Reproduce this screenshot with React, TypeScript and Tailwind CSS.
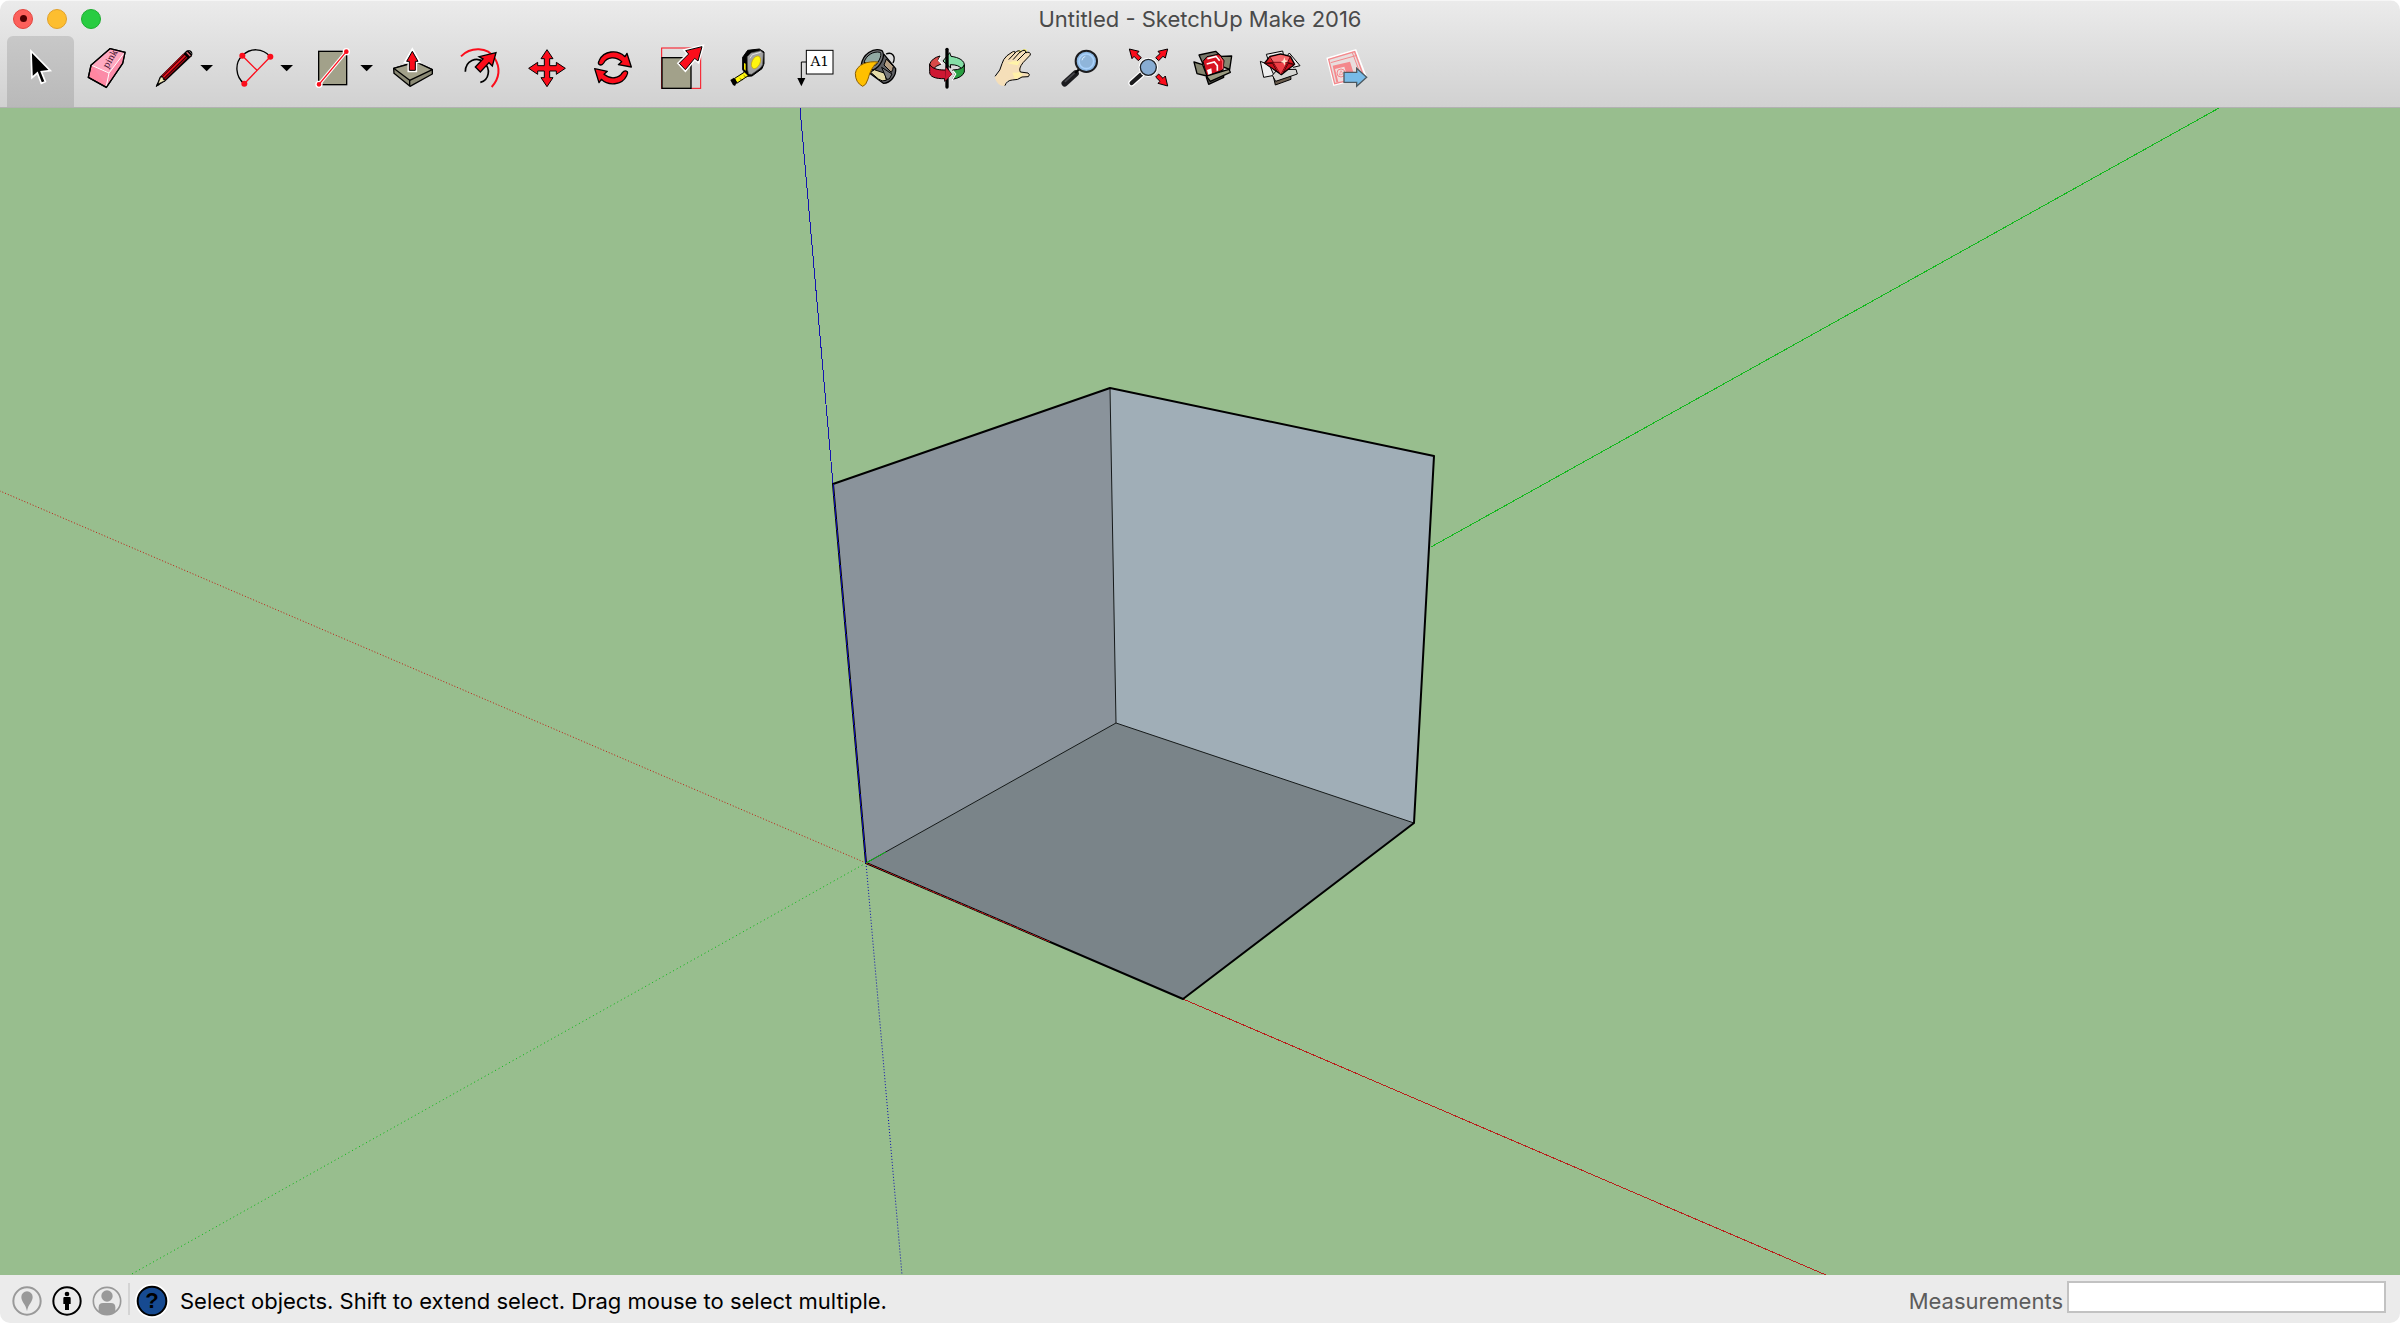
import type { ReactNode } from "react";

const RED = "#fb0d1b";
const STONE = "#a2a18a";

function Glyph({ box, wide, children }: { box: string; wide?: boolean; children: ReactNode }) {
  return (
    <svg
      viewBox={box}
      className={wide ? "h-16 w-20" : "h-16 w-16"}
      fill="none"
      stroke="#000"
      strokeWidth={4}
      aria-hidden="true"
    >
      {children}
    </svg>
  );
}

function Tool({ label, active, children }: { label: string; active?: boolean; children: ReactNode }) {
  return (
    <button
      type="button"
      aria-label={label}
      title={label}
      aria-pressed={active ? true : false}
      className={
        active
          ? "flex h-[71px] justify-center rounded-t-md bg-gradient-to-b from-[#c8c8c8] to-[#b9b9b9] pt-1"
          : "flex h-[71px] justify-center pt-1"
      }
    >
      {children}
    </button>
  );
}

function Toolbar() {
  return (
    <div role="toolbar" aria-label="Getting started tools" className="flex pl-[7px]">
      <div className="grid w-[133px] shrink-0 grid-cols-2">
        <Tool label="Select" active>
          <Glyph box="25 120 192 192">
            <path d="M94 153 L97 233 L113 219 L125 250 L137 245 L125 215 L152 212Z" fill="#000" stroke="#fff" strokeWidth={5} />
          </Glyph>
        </Tool>
        <Tool label="Eraser">
          <Glyph box="224 120 192 192">
            <path d="M272 196 L329 146 L374 157 L367 190 L318 262 L264 232Z" fill="#ff86a0" />
            <path d="M274 196 L329 148 L373 158 L328 218Z" fill="#ffa9c0" stroke="none" />
            <path d="M274 196 L328 218 L373 158 L366 188 L319 258Z" fill="#fb8ba8" stroke="none" />
            <path d="M274 196 L326 219 L371 160 M326 219 L318 258" stroke="#fff" strokeWidth={3} />
            <path d="M272 196 L329 146 L374 157 L367 190 L318 262 L264 232Z" strokeLinejoin="round" />
            <text x="322" y="207" transform="rotate(-59 322 207)" fill="#3a0d2a" stroke="none" fontSize="27" className="font-['DejaVu_Serif',serif]">
              pink
            </text>
          </Glyph>
        </Tool>
      </div>

      <div className="grid w-[240px] shrink-0 grid-cols-3">
        <Tool label="Line">
          <Glyph box="420 120 240 192" wide>
            <path d="M467 261 L479 231 L559 152 Q566 147 574 153 Q580 160 575 169 L496 244Z" fill="#000" stroke="none" />
            <path d="M486 228 L551 163 M494 238 L561 172" stroke="#9b0710" strokeWidth={4} />
            <path d="M490 232 L556 167" stroke="#f0101c" strokeWidth={5} />
            <path d="M474 252 L482 231 L489 232 L490 239 L497 241Z" fill="#f3e9b8" stroke="#000" strokeWidth={2} />
            <path d="M467 261 L472 248 L480 254Z" fill="#000" stroke="none" />
            <path d="M560 157 L571 168" stroke="#e46a74" strokeWidth={4} />
            <path d="M566 152 L575 161" stroke="#8d8d8d" strokeWidth={2} />
            <path d="M601 195 H639 L620 214Z" fill="#000" stroke="none" />
          </Glyph>
        </Tool>
        <Tool label="2 Point Arc">
          <Glyph box="660 120 240 192" wide>
            <path d="M733 251 C706 232 703 188 727 167 C750 143 788 143 811 170" />
            <path d="M733 251 L811 170 M727 167 L771 211" stroke={RED} />
            <g fill={RED} stroke="none">
              <circle cx="733" cy="251" r="9" />
              <circle cx="811" cy="170" r="9" />
              <circle cx="727" cy="167" r="9" />
            </g>
            <path d="M841 195 H879 L860 214Z" fill="#000" stroke="none" />
          </Glyph>
        </Tool>
        <Tool label="Rectangle">
          <Glyph box="0 30 240 192" wide>
            <rect x="56" y="64" width="84" height="100" fill={STONE} />
            <path d="M57 163 L139 65" stroke="#fff" strokeWidth={10} />
            <g fill={RED} stroke="#fff">
              <circle cx="57" cy="163" r="9" />
              <circle cx="139" cy="65" r="9" />
            </g>
            <path d="M57 163 L139 65" stroke={RED} />
            <path d="M181 105 H219 L200 124Z" fill="#000" stroke="none" />
          </Glyph>
        </Tool>
      </div>

      <div className="grid w-[1000px] shrink-0 grid-cols-15">
        <Tool label="Push/Pull">
          <Glyph box="244 30 192 192">
            <path d="M282 115 L349 96 L398 119 L398 132 L331 169 L283 130Z" fill="#8b8a75" strokeLinejoin="round" />
            <path d="M282 115 L349 96 L398 119 L330 151Z" fill={STONE} strokeLinejoin="round" />
            <path d="M330 151 V168" />
            <path d="M338 61 L358 95 H348 V122 H328 V95 H318Z" fill={RED} stroke="#fff" strokeWidth={9} />
            <path d="M338 64 L355 94 H347 V121 H329 V94 H321Z" fill={RED} stroke="#000" strokeWidth={3} />
          </Glyph>
        </Tool>
        <Tool label="Offset">
          <Glyph box="444 30 192 192">
            <path d="M483 79 C512 50 563 50 584 85 C602 113 599 145 575 171" stroke={RED} strokeWidth={6} />
            <path d="M496 125 C496 92 530 78 552 97 C573 116 568 150 541 157" strokeWidth={5} />
            <path d="M588 68 L577 108 L567 98 L541 126 L526 111 L549 87 L537 80Z" fill={RED} />
          </Glyph>
        </Tool>
        <Tool label="Move">
          <Glyph box="644 30 192 192">
            <path
              d="M740 59 L758 86 H748 V107 H768 V97 L795 115 L768 133 V123 H748 V143 H758 L740 170 L722 143 H732 V123 H712 V133 L685 115 L712 97 V107 H732 V86 H722Z"
              fill={RED}
              strokeWidth={3}
            />
          </Glyph>
        </Tool>
        <Tool label="Rotate">
          <Glyph box="4 30 192 192">
            <g fill={RED} strokeWidth={4} strokeLinejoin="round">
              <path d="M59 91 C72 62 113 57 136 80 L142 70 L155 111 L116 104 L126 95 C108 78 82 81 72 99 Q66 108 58 103 Q54 99 59 91Z" />
              <path d="M141 137 C127 166 86 169 65 148 L58 158 L45 116 L83 124 L73 133 C92 149 118 146 128 128 Q135 119 143 125 Q146 130 141 137Z" />
            </g>
          </Glyph>
        </Tool>
        <Tool label="Scale">
          <Glyph box="204 30 192 192">
            <rect x="245" y="54" width="117" height="121" stroke={RED} strokeWidth={3} />
            <rect x="246" y="83" width="87" height="92" fill={STONE} />
            <path d="M366 50 L354 93 L344 85 L316 119 L298 100 L326 72 L317 62Z" fill={RED} stroke="#fff" strokeWidth={11} />
            <path d="M366 50 L354 93 L344 85 L316 119 L298 100 L326 72 L317 62Z" fill={RED} strokeWidth={3} />
          </Glyph>
        </Tool>
        <Tool label="Tape Measure">
          <Glyph box="404 30 192 192">
            <path d="M487 82 L502 61 L537 57 L551 66 L551 101 L545 116 L515 138 L501 139 L487 119Z" fill="#000" strokeWidth={3} strokeLinejoin="round" />
            <path d="M501 80 L512 69 L541 62 L549 69 L547 104 L540 114 L514 133 L505 132 L502 120Z" fill="#a3a3a3" stroke="#555" strokeWidth={2} />
            <path d="M509 85 L516 74 L541 67" stroke="#e4e4e4" strokeWidth={3} />
            <ellipse cx="527" cy="97" rx="12" ry="20" transform="rotate(25 527 97)" fill="#fff60f" stroke="#c9a800" strokeWidth={2} />
            <path d="M491 99 L496 101 V122 L491 118Z" fill="#f5e800" stroke="none" />
            <path d="M463 145 L493 126 L504 137 L469 160Z" fill="#fff60f" strokeWidth={3} />
            <path d="M478 145 L486 151 M490 136 L498 143" stroke="#4c4700" strokeWidth={2} />
            <path d="M450 150 L461 143 L470 156 L464 168 L458 165Z" fill="#000" stroke="none" />
          </Glyph>
        </Tool>
        <Tool label="Text">
          <Glyph box="604 30 192 192">
            <rect x="680" y="61" width="80" height="71" fill="#fff" strokeWidth={3} />
            <path d="M680 96 H665 V146" strokeWidth={3} />
            <path d="M653 144 H677 L665 169Z" fill="#000" stroke="none" />
            <text x="720" y="109" textAnchor="middle" fill="#000" stroke="none" fontSize="41" className="font-['DejaVu_Serif',serif]">
              A1
            </text>
          </Glyph>
        </Tool>
        <Tool label="Paint Bucket">
          <Glyph box="-36 30 192 192">
            <path d="M78 72 C96 65 109 78 99 99" strokeWidth={4} />
            <path d="M72 73 L107 116 C109 137 92 159 70 160 L24 126Z" fill="#5e5f63" strokeLinejoin="round" />
            <path d="M79 87 L100 109 Q99 120 94 127 L72 105Z" fill="#b49d82" strokeWidth={3} />
            <path d="M43 119 L75 130 L79 151 Q66 156 55 147 L32 127Z" fill="#e5dba7" strokeWidth={3} />
            <path d="M65 112 L96 132 L88 147 L80 148Z" fill="#77787b" strokeWidth={3} />
            <path d="M4 104 C8 74 39 51 66 62 C78 76 62 111 39 120Z" fill="#77797c" strokeWidth={4} />
            <path d="M12 97 C18 77 39 62 61 67 C67 77 55 98 45 107Z" fill="#91a9a3" strokeWidth={3} />
            <path d="M-14 130 C-10 103 24 92 54 96 C40 105 30 124 24 147 Q18 167 8 169 Q-14 158 -14 130Z" fill="#ffc000" stroke="#8a5c00" strokeWidth={3} />
          </Glyph>
        </Tool>
        <Tool label="Orbit">
          <Glyph box="164 30 192 192">
            <g strokeWidth={3} strokeLinejoin="round">
              <path d="M208 102 Q215 84 239 78 L233 91 L244 101 Q225 108 217 119 Q206 113 208 102Z" fill="#d84a48" />
              <path d="M208 103 C218 120 241 120 257 120 L258 110 L274 133 L253 154 L253 146 C226 147 206 140 208 125Z" fill="#ce1833" />
              <path d="M248 93 L268 68 L272 79 C296 82 314 92 312 108 Q309 115 303 116 Q296 104 270 104 L271 114Z" fill="#85dfa7" />
              <path d="M312 104 V126 Q306 143 276 148 L285 132 L277 120 Q308 119 312 104Z" fill="#299f42" />
            </g>
            <path d="M241 81 L235 92 L246 103" stroke="#fff" strokeWidth={4} />
            <path d="M278 122 L286 132 L275 151" stroke="#fff" strokeWidth={4} />
            <path d="M260 58 V171" strokeWidth={10} strokeLinecap="round" />
            <path d="M256 112 L275 133 L254 153Z" fill="#ce1833" stroke="none" />
          </Glyph>
        </Tool>
        <Tool label="Pan">
          <Glyph box="364 30 192 192">
            <path
              d="M405 142 Q422 126 426 104 Q430 90 441 77 L457 65 Q464 60 466 67 L471 64 Q480 58 482 65 L491 60 Q500 58 499 67 L508 66 Q515 69 511 77 L490 99 Q479 116 484 126 L507 130 Q513 136 505 140 Q484 141 472 149 Q453 149 440 154 L435 168 Q414 170 405 142Z"
              fill="#f5dfb9"
              stroke="none"
            />
            <path d="M434 96 Q448 101 459 94 L482 94 L474 106 Q446 101 434 96Z" fill="#fff3a8" stroke="none" />
            <path d="M458 128 L484 127 L490 136 L466 148Z" fill="#fff0a8" stroke="none" />
            <path d="M478 66 Q480 60 484 64 M490 61 Q499 58 500 65" stroke="#f5ee79" strokeWidth={6} />
            <path
              d="M407 138 Q424 120 427 101 Q430 88 442 77 L458 66 Q467 61 466 69 L448 88 M466 68 Q477 58 482 65 L461 88 M482 66 Q496 55 499 66 L474 91 M499 68 Q513 63 512 75 L490 98 Q476 116 482 126 L505 129 Q513 134 506 140 L487 141 Q475 151 458 150 Q442 151 436 166"
              strokeWidth={3}
              strokeLinecap="round"
              strokeLinejoin="round"
            />
          </Glyph>
        </Tool>
        <Tool label="Zoom">
          <Glyph box="564 30 192 192">
            <path d="M614 160 L647 130" stroke="#1c1c1f" strokeWidth={19} strokeLinecap="round" />
            <path d="M616 154 L642 130" stroke="#47474b" strokeWidth={5} strokeLinecap="round" />
            <path d="M646 129 L658 117" strokeWidth={7} />
            <circle cx="679" cy="94" r="32" fill="#8bb6e0" stroke="#1c1c1e" strokeWidth={6} />
            <circle cx="679" cy="94" r="22" fill="#8fb5da" stroke="#a9d1fa" strokeWidth={5} />
            <path d="M666 91 Q667 82 676 79" stroke="#d5ebff" strokeWidth={3} />
          </Glyph>
        </Tool>
        <Tool label="Zoom Extents">
          <Glyph box="-76 30 192 192">
            <path d="M-26 159 L2 134" stroke="#fff" strokeWidth={20} strokeLinecap="round" />
            <path d="M-26 159 L2 134" stroke="#1b1b1d" strokeWidth={13} strokeLinecap="round" />
            <circle cx="24" cy="112" r="29" fill="#fff" stroke="none" />
            <circle cx="24" cy="112" r="24" fill="#88add3" stroke="#202428" strokeWidth={4} />
            <g fill={RED} strokeWidth={3}>
              <path d="M82 57 L75 84 L68 79 L55 92 L46 83 L59 71 L53 64Z" />
              <path d="M82 168 L53 160 L59 154 L46 141 L55 132 L68 145 L75 138Z" />
              <path d="M-33 57 L-4 64 L-10 71 L3 83 L-6 92 L-19 79 L-25 86Z" />
            </g>
          </Glyph>
        </Tool>
        <Tool label="3D Warehouse">
          <Glyph box="124 30 192 192">
            <g strokeLinejoin="round" strokeWidth={4}>
              <path d="M178 75 L228 64 L246 81 L190 102Z" fill="#77776a" />
              <path d="M163 96 L189 104 L202 138 L172 131Z" fill="#85856f" />
              <path d="M244 79 L276 78 L270 118 L251 111Z" fill="#85856f" />
              <path d="M190 94 L202 80 L238 72 L253 92 L250 120 L202 139Z" fill="#d81422" strokeWidth={3} />
              <path d="M200 142 L251 123 L252 142 L207 163Z" fill="#4e4e43" />
              <path d="M200 138 L268 118 L272 127 L212 154Z" fill="#9c9c82" />
            </g>
            <path d="M203 86 L229 79 L240 92 M201 102 L224 96 L233 107 V122" stroke="#fff" strokeWidth={5} />
            <path d="M240 80 L249 93 V116" stroke="#ff5962" strokeWidth={4} />
            <path d="M202 120 L215 115 L217 130 L206 134Z" fill="#fff" stroke="none" />
          </Glyph>
        </Tool>
        <Tool label="Extension Warehouse">
          <Glyph box="324 30 192 192">
            <g strokeLinejoin="round" strokeWidth={3} fill="#eee">
              <path d="M379 73 L428 63 L432 82 L386 94Z" />
              <path d="M361 94 L388 105 L402 136 L371 142Z" />
              <path d="M448 69 L480 107 L460 112 L438 82Z" />
              <path d="M400 139 L451 130 L453 148 L406 165Z" fill="#6a5c4d" />
              <path d="M397 136 L412 119 L468 118 L472 132 L407 154Z" fill="#d5d5d2" />
            </g>
            <path d="M374 99 L390 79 L422 72 L451 79 L464 103 L424 134Z" fill="#df1b23" strokeLinejoin="round" />
            <path d="M388 83 L422 74 L450 82 L443 98 L400 98Z" fill="#f4696c" stroke="none" />
            <path d="M374 99 L400 97 L443 97 L464 103 M389 80 L400 97 L422 132 L443 97 L451 79" stroke="#68050c" strokeWidth={3} />
            <path d="M402 98 L422 132 L440 98Z" fill="#ef4047" stroke="none" />
            <path d="M376 101 L398 100 L411 124Z M445 100 L462 104 L430 127Z" fill="#c9101c" stroke="#000" strokeWidth={2} />
            <path d="M433 82 L436 91 L444 93 L436 97 L433 107 L430 98 L422 96 L430 91Z" fill="#ffe8cf" stroke="none" />
          </Glyph>
        </Tool>
        <Tool label="Send to LayOut">
          <Glyph box="524 30 192 192">
            <path d="M561 85 L646 60 L677 140 L581 165Z" fill="#e8dddd" stroke="#fff" strokeWidth={5} />
            <path d="M565 88 L643 65 L670 139 L583 161Z" stroke="#f4888c" strokeWidth={4} />
            <path d="M571 98 L650 76 M636 68 L660 132" stroke="#f4888c" strokeWidth={3} />
            <path d="M577 107 L629 95 L639 126 L617 143 L616 157 L588 157Z" fill="#f4888c" stroke="none" />
            <path d="M584 117 L612 110 L623 150 L594 156Z" fill="#f2dddd" stroke="none" />
            <circle cx="602" cy="129" r="12" stroke="#f4888c" strokeWidth={3} />
            <path d="M597 135 L602 122 L608 132Z" stroke="#f4888c" strokeWidth={2} />
            <path d="M611 127 H649 V115 L679 142 L649 169 V157 H611Z" fill="#78bbe8" stroke="#4d5960" strokeWidth={4} />
          </Glyph>
        </Tool>
      </div>
    </div>
  );
}

function Header() {
  return (
    <header className="shrink-0 border-t border-b border-t-[#f6f6f6] border-b-[#b2b2b2] bg-gradient-to-b from-[#ebebeb] to-[#d1d1d1]">
      <div className="grid h-[35px] grid-cols-[1fr_auto_1fr] items-center">
        <div className="flex gap-[14px] pl-[13px]">
          <button type="button" aria-label="Close" className="flex size-5 items-center justify-center rounded-full border border-[#e2463f] bg-[#fc605b]">
            <span className="size-[7px] rounded-full bg-[#4d0000]" />
          </button>
          <button type="button" aria-label="Minimize" className="size-5 rounded-full border border-[#e0a02c] bg-[#fdbe30]" />
          <button type="button" aria-label="Zoom window" className="size-5 rounded-full border border-[#1dad30] bg-[#28cc41]" />
        </div>
        <h1 className="text-[22px] leading-6 text-[#4a4a4a]">Untitled - SketchUp Make 2016</h1>
        <div />
      </div>
      <Toolbar />
    </header>
  );
}

function Viewport() {
  return (
    <main className="min-h-0 flex-1 bg-[#98be8e]">
      <svg
        viewBox="0 108 2400 1167"
        preserveAspectRatio="xMidYMid slice"
        className="block h-full w-full"
        fill="none"
        role="img"
        aria-label="Open cube model with drawing axes"
      >
        <path d="M866 863 L0 491" stroke="#c01810" strokeDasharray="1 2" />
        <path d="M866 863 L130 1275" stroke="#00b80c" strokeDasharray="1 3" />
        <path d="M866 863 L902 1275" stroke="#0c0cb0" strokeDasharray="1 2" />
        <g shapeRendering="crispEdges">
          <path d="M833 484 L800 108" stroke="#1414b0" />
          <path d="M1431 547 L2219 108" stroke="#12b81c" />
          <path d="M1183 999 L1826 1275" stroke="#b8201c" />
        </g>

        <path d="M833 484 L1110 388 L1116 723 L866 863Z" fill="#8a939b" />
        <path d="M1110 388 L1434 456 L1414 823 L1116 723Z" fill="#a0aeb7" />
        <path d="M866 863 L1116 723 L1414 823 L1183 999Z" fill="#7a8489" />

        <path d="M1110 388 L1116 723 L866 863 M1116 723 L1414 823" stroke="#15181a" />
        <path d="M866 863 L833 484 L1110 388 L1434 456 L1414 823 L1183 999Z" stroke="#000" strokeWidth={2} strokeLinejoin="round" />
        <g shapeRendering="crispEdges">
          <path d="M833 484 L866 863" stroke="#0a0a9c" />
          <path d="M866 863 L1050 942" stroke="#8c1212" />
          <path d="M866 863 L886 852" stroke="#12a81c" />
        </g>
      </svg>
    </main>
  );
}

function StatusBar() {
  return (
    <footer className="flex h-12 shrink-0 items-center bg-[#ebebeb] pr-[14px] pl-3 text-[22px] leading-6">
      <div className="flex items-center gap-[10px] pt-1">
        <button type="button" aria-label="Geo-location">
          <svg viewBox="0 0 90 90" className="size-[30px]">
            <circle cx="45" cy="45" r="41" fill="none" stroke="#999" strokeWidth={6} />
            <path d="M45 76 C42 55 28 48 28 33 A17 17 0 0 1 62 33 C62 48 48 55 45 76Z" fill="#999" />
          </svg>
        </button>
        <button type="button" aria-label="Credits">
          <svg viewBox="0 0 90 90" className="size-[30px]">
            <circle cx="45" cy="45" r="41" fill="none" stroke="#000" strokeWidth={6} />
            <circle cx="45" cy="24" r="7" />
            <path d="M37 33 H53 Q56 33 56 37 V54 H51 V72 H39 V54 H34 V37 Q34 33 37 33Z" />
          </svg>
        </button>
        <button type="button" aria-label="Sign in">
          <svg viewBox="0 0 90 90" className="size-[30px]">
            <circle cx="45" cy="45" r="41" fill="none" stroke="#999" strokeWidth={5} />
            <circle cx="45" cy="30" r="17" fill="#999" />
            <path d="M20 78 V64 Q20 51 33 51 H57 Q70 51 70 64 V78 Q45 96 20 78Z" fill="#999" />
          </svg>
        </button>
      </div>
      <div className="ml-[6px] h-8 w-0.5 bg-[#d4d4d4]" />
      <button type="button" aria-label="Help" className="ml-1 pt-1">
        <svg viewBox="0 0 108 108" className="size-9">
          <circle cx="54" cy="54" r="51" fill="#fff" />
          <circle cx="54" cy="54" r="43" fill="#164a91" stroke="#000" strokeWidth={6} />
          <text x="54" y="76" textAnchor="middle" fontSize="66" className="font-['Liberation_Sans',sans-serif] font-bold">
            ?
          </text>
        </svg>
      </button>
      <p className="ml-[10px] pt-1 text-black">Select objects. Shift to extend select. Drag mouse to select multiple.</p>
      <label htmlFor="measurements" className="ml-auto pt-1 text-[#5c5c5c]">
        Measurements
      </label>
      <input
        id="measurements"
        type="text"
        className="mb-1 ml-1 h-8 w-[319px] border-2 border-[#c2c2c2] bg-white px-1 text-black outline-none"
      />
    </footer>
  );
}

export default function App() {
  return (
    <div className="flex h-screen flex-col overflow-hidden rounded-[10px] font-[Inter,sans-serif]">
      <Header />
      <Viewport />
      <StatusBar />
    </div>
  );
}
